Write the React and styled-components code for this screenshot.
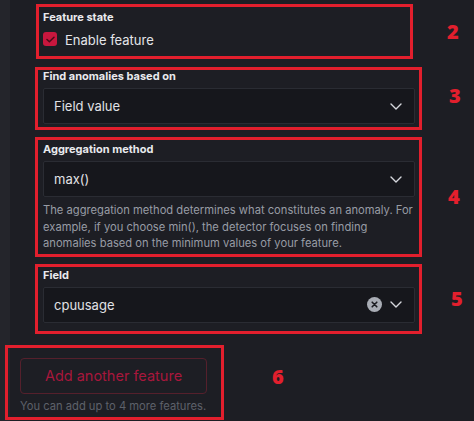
import React from "react";
import styled, { createGlobalStyle } from "styled-components";

const Global = createGlobalStyle`
  html, body { margin: 0; padding: 0; }
  body {
    width: 474px;
    height: 421px;
    overflow: hidden;
    background: linear-gradient(to right, #24252b 0 10px, #1d1e24 10px);
    font-family: Inter, "Noto Sans", sans-serif;
    -webkit-font-smoothing: antialiased;
  }
`;

const Stack = styled.div`
  display: flex;
  flex-direction: column;
  gap: 7px;
  padding-top: 4px;
`;

const Row = styled.div`
  display: flex;
  align-items: center;
  margin-left: ${(p) => p.$left}px;
  margin-top: ${(p) => p.$mt || 0}px;
`;

const Annot = styled.section`
  box-sizing: border-box;
  width: ${(p) => p.$w}px;
  border: 3px solid #e21f2d;
  padding: ${(p) => `${p.$pt}px ${p.$pr}px ${p.$pb}px ${p.$pl}px`};
  display: flex;
  flex-direction: column;
`;

const Num = styled.div`
  font-family: "Open Sans", sans-serif;
  font-weight: 800;
  font-size: 20px;
  line-height: 20px;
  color: #e21f2d;
  margin-left: ${(p) => p.$gap}px;
  margin-bottom: ${(p) => p.$up || 0}px;
`;

const Label = styled.div`
  font-size: 11px;
  line-height: 13px;
  font-weight: 700;
  color: #e9eaee;
  margin-bottom: ${(p) => p.$mb || 5}px;
`;

const CheckRow = styled.label`
  display: flex;
  align-items: center;
  gap: 8px;
  height: 18px;
  font-size: 13px;
  color: #e4e5e9;
`;

const CheckBox = styled.span`
  width: 14px;
  height: 14px;
  border-radius: 3px;
  background: #c8173e;
  display: flex;
  align-items: center;
  justify-content: center;
  margin-top: -2px;
`;

const Select = styled.div`
  box-sizing: border-box;
  height: 36px;
  display: flex;
  align-items: center;
  padding: 0 12px 0 10px;
  background: #16171c;
  border: 1px solid #2a2c33;
  border-radius: 2px;
  font-size: 13px;
  color: #e0e1e5;
`;

const Value = styled.span`
  flex: 1;
`;

const Icons = styled.span`
  display: flex;
  align-items: center;
  gap: 8px;
`;

const Help = styled.p`
  margin: ${(p) => p.$mt}px 0 0;
  font-size: 11.2px;
  line-height: 16.5px;
  white-space: ${(p) => (p.$nowrap ? "nowrap" : "normal")};
  color: ${(p) => p.$color || "#989ca5"};
`;

const AddButton = styled.button`
  box-sizing: border-box;
  width: 187px;
  height: 36px;
  background: transparent;
  border: 1px solid #55202c;
  border-radius: 4px;
  font-family: inherit;
  font-size: 14.5px;
  color: #a8173c;
  padding: 0;
  text-align: center;
`;

const Chevron = () => (
  <svg width="12" height="7" viewBox="0 0 12 7" fill="none">
    <path d="M1 1l5 5 5-5" stroke="#d6d8dd" strokeWidth="1.4" strokeLinecap="round" strokeLinejoin="round" />
  </svg>
);

const Clear = () => (
  <svg width="15" height="15" viewBox="0 0 15 15">
    <circle cx="7.5" cy="7.5" r="7.5" fill="#a9adb5" />
    <path d="M5.2 5.2l4.6 4.6M9.8 5.2l-4.6 4.6" stroke="#1b1c21" strokeWidth="1.6" strokeLinecap="round" />
  </svg>
);

const Check = () => (
  <svg width="9" height="7" viewBox="0 0 9 7" fill="none">
    <path d="M1 3.5l2.4 2.3L8 1.2" stroke="#4a0b18" strokeWidth="1.5" strokeLinecap="round" strokeLinejoin="round" />
  </svg>
);

export default function App() {
  return (
    <>
      <Global />
      <Stack>
        <Row $left={36}>
          <Annot $w={377} $pt={4} $pr={4} $pb={7} $pl={4}>
            <Label $mb={7}>Feature state</Label>
            <CheckRow>
              <CheckBox>
                <Check />
              </CheckBox>
              Enable feature
            </CheckRow>
          </Annot>
          <Num $gap={34}>2</Num>
        </Row>

        <Row $left={35} $mt={1}>
          <Annot $w={387} $pt={0} $pr={4} $pb={3} $pl={5}>
            <Label>Find anomalies based on</Label>
            <Select>
              <Value>Field value</Value>
              <Chevron />
            </Select>
          </Annot>
          <Num $gap={27} $up={5}>3</Num>
        </Row>

        <Row $left={35}>
          <Annot $w={387} $pt={3} $pr={4} $pb={2} $pl={5}>
            <Label>Aggregation method</Label>
            <Select>
              <Value>max()</Value>
              <Chevron />
            </Select>
            <Help $mt={5}>
              The aggregation method determines what constitutes an anomaly. For
              example, if you choose min(), the detector focuses on finding
              anomalies based on the minimum values of your feature.
            </Help>
          </Annot>
          <Num $gap={26}>4</Num>
        </Row>

        <Row $left={35}>
          <Annot $w={387} $pt={2} $pr={4} $pb={8} $pl={5}>
            <Label>Field</Label>
            <Select>
              <Value>cpuusage</Value>
              <Icons>
                <Clear />
                <Chevron />
              </Icons>
            </Select>
          </Annot>
          <Num $gap={29}>5</Num>
        </Row>

        <Row $left={5} $mt={4}>
          <Annot $w={219} $pt={10} $pr={14} $pb={3} $pl={12}>
            <AddButton type="button">Add another feature</AddButton>
            <Help $mt={4} $nowrap $color="#5d616a">You can add up to 4 more features.</Help>
          </Annot>
          <Num $gap={48} $up={10}>6</Num>
        </Row>
      </Stack>
    </>
  );
}
